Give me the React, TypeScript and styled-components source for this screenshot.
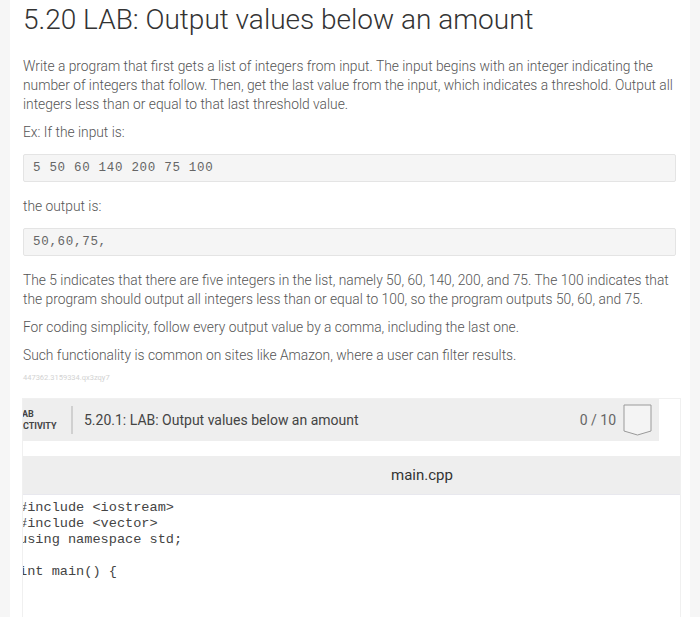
import styled, { createGlobalStyle } from "styled-components";

const Global = createGlobalStyle`
  html, body {
    margin: 0;
    padding: 0;
    background: #f6f6f6;
  }
`;

const Page = styled.div`
  margin: 0 10px;
  background: #fff;
  height: 617px;
  box-sizing: border-box;
  padding: 3px 14px 0 13px;
  font-family: Roboto, "Liberation Sans", sans-serif;
  color: #555;
  overflow: hidden;
`;

const Title = styled.h1`
  margin: 0 0 20px;
  font-size: 28px;
  font-weight: 300;
  color: #333;
  line-height: 34px;
`;

const Para = styled.p<{ $gap?: number }>`
  margin: 0 0 ${(p) => p.$gap ?? 9}px;
  font-size: 13.8px;
  font-weight: 300;
  line-height: 19px;
  color: #555;
`;

const CodeBlock = styled.div`
  background: #f5f5f5;
  border: 1px solid #e4e4e4;
  border-radius: 2px;
  padding: 5px 9px;
  margin: 12px 0 15px;
  font-family: "Liberation Mono", monospace;
  font-size: 12.5px;
  letter-spacing: 0.7px;
  line-height: 16px;
  color: #666;
  white-space: pre;
`;

const Tag = styled.div`
  font-size: 7.5px;
  color: #d2d2d2;
  margin: 8px 0 16px;
`;

const Lab = styled.section`
  border: 1px solid #f0f0f0;
  border-bottom: none;
  margin-left: -1px;
  width: 657px;
`;

const LabHeader = styled.div`
  display: flex;
  align-items: center;
  background: #eeeeee;
  height: 42px;
  margin-right: 21px;
`;

const LabLabel = styled.div`
  width: 48px;
  overflow: hidden;
  font-size: 9px;
  font-weight: 700;
  color: #444;
  line-height: 12px;
  white-space: nowrap;
`;

const Shift = styled.div<{ $by: number }>`
  margin-left: ${(p) => -p.$by}px;
`;

const Divider = styled.div`
  width: 2px;
  height: 28px;
  background: #d0d0d0;
  margin-right: 11px;
`;

const LabTitle = styled.div`
  flex: 1;
  font-size: 14px;
  color: #444;
`;

const Score = styled.div`
  font-size: 14px;
  color: #666;
  margin-right: 7px;
`;

const Badge = styled.svg`
  margin-right: 6px;
`;

const Spacer = styled.div`
  height: 15px;
`;

const FileBar = styled.div`
  background: #eeeeee;
  height: 38px;
  display: flex;
  align-items: center;
  padding-left: 368px;
  font-size: 15px;
  color: #333;
  border-bottom: 1px solid #e8e8ee;
`;

const Editor = styled.div`
  overflow: hidden;
  padding-top: 5px;
  height: 130px;
`;

const Code = styled.pre`
  margin: 0 0 0 -4px;
  font-family: "Liberation Mono", "Courier New", monospace;
  font-size: 13.6px;
  line-height: 16px;
  color: #444;
`;

const code = `#include <iostream>
#include <vector>
using namespace std;

int main() {
`;

export default function App() {
  return (
    <>
      <Global />
      <Page>
        <Title>5.20 LAB: Output values below an amount</Title>
        <Para>
          Write a program that first gets a list of integers from input. The input begins with an integer
          indicating the number of integers that follow. Then, get the last value from the input, which
          indicates a threshold. Output all integers less than or equal to that last threshold value.
        </Para>
        <Para $gap={0}>Ex: If the input is:</Para>
        <CodeBlock>5 50 60 140 200 75 100</CodeBlock>
        <Para $gap={0}>the output is:</Para>
        <CodeBlock>50,60,75,</CodeBlock>
        <Para>
          The 5 indicates that there are five integers in the list, namely 50, 60, 140, 200, and 75. The
          100 indicates that the program should output all integers less than or equal to 100, so the
          program outputs 50, 60, and 75.
        </Para>
        <Para>For coding simplicity, follow every output value by a comma, including the last one.</Para>
        <Para $gap={0}>Such functionality is common on sites like Amazon, where a user can filter results.</Para>
        <Tag>447362.3159334.qx3zqy7</Tag>
        <Lab>
          <LabHeader>
            <LabLabel>
              <Shift $by={6}>
                LAB
                <br />
                ACTIVITY
              </Shift>
            </LabLabel>
            <Divider />
            <LabTitle>5.20.1: LAB: Output values below an amount</LabTitle>
            <Score>0 / 10</Score>
            <Badge width="30" height="32" viewBox="0 0 30 32">
              <path d="M1 1 H28 V27 L14.5 31 L1 27 Z" fill="#f4f4f4" stroke="#9a9a9a" strokeWidth="1" />
            </Badge>
          </LabHeader>
          <Spacer />
          <FileBar>main.cpp</FileBar>
          <Editor>
            <Code>{code}</Code>
          </Editor>
        </Lab>
      </Page>
    </>
  );
}
